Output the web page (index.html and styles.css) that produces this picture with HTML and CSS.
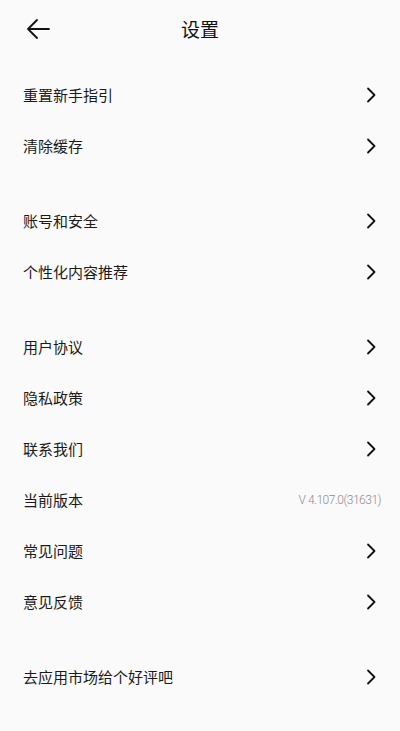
FILE: index.html
```html
<!DOCTYPE html>
<html lang="zh-CN">
<head>
<meta charset="utf-8">
<title>设置</title>
<link rel="stylesheet" href="styles.css">
</head>
<body>
<div class="page">
  <header class="header">
    <svg class="back" width="24" height="22" viewBox="0 0 24 22" fill="none" stroke="#111" stroke-width="1.8" stroke-linecap="round" stroke-linejoin="round">
      <path d="M23 11H2M11 2L2 11L11 20"/>
    </svg>
    <h1 class="title">设置</h1>
  </header>

  <section class="group">
    <div class="row"><span class="label">重置新手指引</span><svg class="chev" width="10" height="16" viewBox="0 0 10 16" fill="none" stroke="#111" stroke-width="1.8" stroke-linecap="round" stroke-linejoin="round"><path d="M2 1.5L8.5 8L2 14.5"/></svg></div>
    <div class="row"><span class="label">清除缓存</span><svg class="chev" width="10" height="16" viewBox="0 0 10 16" fill="none" stroke="#111" stroke-width="1.8" stroke-linecap="round" stroke-linejoin="round"><path d="M2 1.5L8.5 8L2 14.5"/></svg></div>
  </section>

  <section class="group">
    <div class="row"><span class="label">账号和安全</span><svg class="chev" width="10" height="16" viewBox="0 0 10 16" fill="none" stroke="#111" stroke-width="1.8" stroke-linecap="round" stroke-linejoin="round"><path d="M2 1.5L8.5 8L2 14.5"/></svg></div>
    <div class="row"><span class="label">个性化内容推荐</span><svg class="chev" width="10" height="16" viewBox="0 0 10 16" fill="none" stroke="#111" stroke-width="1.8" stroke-linecap="round" stroke-linejoin="round"><path d="M2 1.5L8.5 8L2 14.5"/></svg></div>
  </section>

  <section class="group">
    <div class="row"><span class="label">用户协议</span><svg class="chev" width="10" height="16" viewBox="0 0 10 16" fill="none" stroke="#111" stroke-width="1.8" stroke-linecap="round" stroke-linejoin="round"><path d="M2 1.5L8.5 8L2 14.5"/></svg></div>
    <div class="row"><span class="label">隐私政策</span><svg class="chev" width="10" height="16" viewBox="0 0 10 16" fill="none" stroke="#111" stroke-width="1.8" stroke-linecap="round" stroke-linejoin="round"><path d="M2 1.5L8.5 8L2 14.5"/></svg></div>
    <div class="row"><span class="label">联系我们</span><svg class="chev" width="10" height="16" viewBox="0 0 10 16" fill="none" stroke="#111" stroke-width="1.8" stroke-linecap="round" stroke-linejoin="round"><path d="M2 1.5L8.5 8L2 14.5"/></svg></div>
    <div class="row"><span class="label">当前版本</span><span class="version">V 4.107.0(31631)</span></div>
    <div class="row"><span class="label">常见问题</span><svg class="chev" width="10" height="16" viewBox="0 0 10 16" fill="none" stroke="#111" stroke-width="1.8" stroke-linecap="round" stroke-linejoin="round"><path d="M2 1.5L8.5 8L2 14.5"/></svg></div>
    <div class="row"><span class="label">意见反馈</span><svg class="chev" width="10" height="16" viewBox="0 0 10 16" fill="none" stroke="#111" stroke-width="1.8" stroke-linecap="round" stroke-linejoin="round"><path d="M2 1.5L8.5 8L2 14.5"/></svg></div>
  </section>

  <section class="group">
    <div class="row"><span class="label">去应用市场给个好评吧</span><svg class="chev" width="10" height="16" viewBox="0 0 10 16" fill="none" stroke="#111" stroke-width="1.8" stroke-linecap="round" stroke-linejoin="round"><path d="M2 1.5L8.5 8L2 14.5"/></svg></div>
  </section>
</div>
</body>
</html>
```

FILE: styles.css
```css
* { box-sizing: border-box; }
html, body {
  margin: 0;
  padding: 0;
  background: #fafafa;
}
body {
  font-family: "Noto Sans CJK SC", "Noto Sans", sans-serif;
  color: #1a1a1a;
  width: 400px;
  height: 731px;
  overflow: hidden;
}
.page {
  display: flex;
  flex-direction: column;
}
.header {
  height: 57px;
  display: flex;
  align-items: center;
  justify-content: center;
  position: relative;
  margin-bottom: 12px;
}
.back {
  position: absolute;
  left: 26px;
  top: 18px;
}
.title {
  margin: 0 0 1px;
  font-size: 19px;
  font-weight: 400;
  line-height: 1;
  color: #111;
}
.group {
  display: flex;
  flex-direction: column;
  margin-bottom: 24px;
}
.row {
  height: 51px;
  display: flex;
  align-items: center;
  justify-content: space-between;
  padding: 0 24px 0 23px;
}
.label {
  font-size: 15px;
  line-height: 1;
  color: #1a1a1a;
}
.chev {
  display: block;
}
.version {
  font-family: "Roboto", "Noto Sans", sans-serif;
  font-size: 12px;
  font-weight: 300;
  letter-spacing: -0.5px;
  color: #8c8c8c;
  margin-right: -5px;
}
```
